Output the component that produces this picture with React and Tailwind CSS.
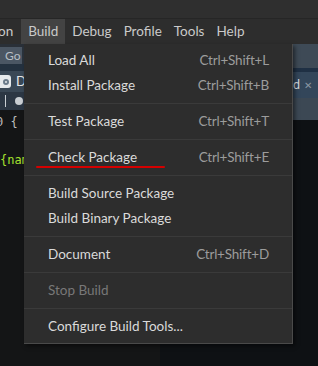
import React from "react";

const font = { fontFamily: "Lato, 'Noto Sans', sans-serif" };

function Item({ label, shortcut, disabled, underline }) {
  return (
    <div className="relative flex h-[25px] items-center justify-between pl-[24px] pr-[23px]">
      <span className={disabled ? "text-[#787878]" : "text-[#dadada]"}>{label}</span>
      {shortcut && <span className="tracking-[-0.2px] text-[#9c9c9c]">{shortcut}</span>}
      {underline && (
        <div className="absolute left-[12px] top-[21px] h-[2px] w-[129px] rounded-full bg-[#d40000]" />
      )}
    </div>
  );
}

function Sep() {
  return <div className="my-[5px] h-px bg-[#3a3a3a]" />;
}

export default function App() {
  return (
    <div
      className="relative h-[366px] w-[318px] overflow-hidden bg-[#111111] text-[13.5px]"
      style={font}
    >
      {/* title strip */}
      <div className="h-[19px] border-b border-[#262626] bg-[#2f2f2f]" />
      {/* menu bar */}
      <div className="flex h-[25px] items-stretch bg-[#2d2d2d] text-[#cacaca]">
        <div className="flex items-center pl-0 pr-[8px] -ml-[2px]">on</div>
        <div className="flex w-[44px] items-center justify-center bg-[#434343]">Build</div>
        <div className="flex items-center px-[6px] pl-[7px]">Debug</div>
        <div className="flex items-center px-[6px]">Profile</div>
        <div className="flex items-center px-[6px]">Tools</div>
        <div className="flex items-center px-[6px]">Help</div>
      </div>

      {/* background panes */}
      <div className="flex h-[322px]">
        {/* left pane */}
        <div className="flex w-[160px] flex-col">
          <div className="h-[3px] bg-[#2a3038]" />
          <div className="flex h-[17px] items-center bg-[#2c343d]">
            <div className="flex h-full w-[22px] items-center bg-[#4b5663] pl-[5px] text-[12px] text-[#b9c0c7]">
              Go
            </div>
          </div>
          <div className="h-[7px] bg-[#24313f]" />
          <div className="flex h-[21px] items-center gap-[5px] bg-[#3a4856]">
            <div className="flex h-[13px] w-[11px] items-center justify-center rounded-r-[3px] bg-[#e6e9ec]">
              <div className="h-[6px] w-[6px] rounded-full border-2 border-[#6b7b8a]" />
            </div>
            <span className="text-[13px] text-[#e6e6e6]">D</span>
          </div>
          <div className="flex h-[18px] items-center gap-[9px] bg-[#2c3744] pl-[5px]">
            <div className="h-[12px] w-px bg-[#c9ced3]" />
            <div className="h-[8px] w-[8px] rounded-full bg-[#c9ced3]" />
          </div>
          <div
            className="flex-1 bg-[#141516] pt-[5px] text-[12px] leading-[14px]"
            style={{ fontFamily: "'DejaVu Sans Mono', monospace" }}
          >
            <div className="-ml-[4px] text-[#bfbfbf]">0 {"{"}</div>
            <div className="mt-[24px] text-[#a6e22e]">{"{nam"}</div>
          </div>
        </div>
        {/* right pane */}
        <div className="flex flex-1 flex-col">
          <div className="h-[24px] bg-[#3e4a56]" />
          <div className="h-[4px] bg-[#1f3044]" />
          <div className="flex h-[26px] items-center justify-end bg-[#33465a] pr-[6px] text-[12.5px]">
            <span className="text-[#d6dbe0]">nd</span>
            <span className="ml-[4px] text-[10px] text-[#8a96a2]">✕</span>
          </div>
          <div className="h-[22px] bg-[#3c4854]" />
          <div className="flex-1 bg-[#0e1114]" />
        </div>
      </div>

      {/* dropdown menu */}
      <div className="absolute left-[24px] top-[44px] w-[269px] border-b border-r border-[#4a4a4a] bg-[#2d2d2d] pb-[4px] pt-[4px] shadow-[2px_2px_4px_rgba(0,0,0,0.5)]">
        <Item label="Load All" shortcut="Ctrl+Shift+L" />
        <Item label="Install Package" shortcut="Ctrl+Shift+B" />
        <Sep />
        <Item label="Test Package" shortcut="Ctrl+Shift+T" />
        <Sep />
        <Item label="Check Package" shortcut="Ctrl+Shift+E" underline />
        <Sep />
        <Item label="Build Source Package" />
        <Item label="Build Binary Package" />
        <Sep />
        <Item label="Document" shortcut="Ctrl+Shift+D" />
        <Sep />
        <Item label="Stop Build" disabled />
        <Sep />
        <Item label="Configure Build Tools..." />
      </div>
    </div>
  );
}
